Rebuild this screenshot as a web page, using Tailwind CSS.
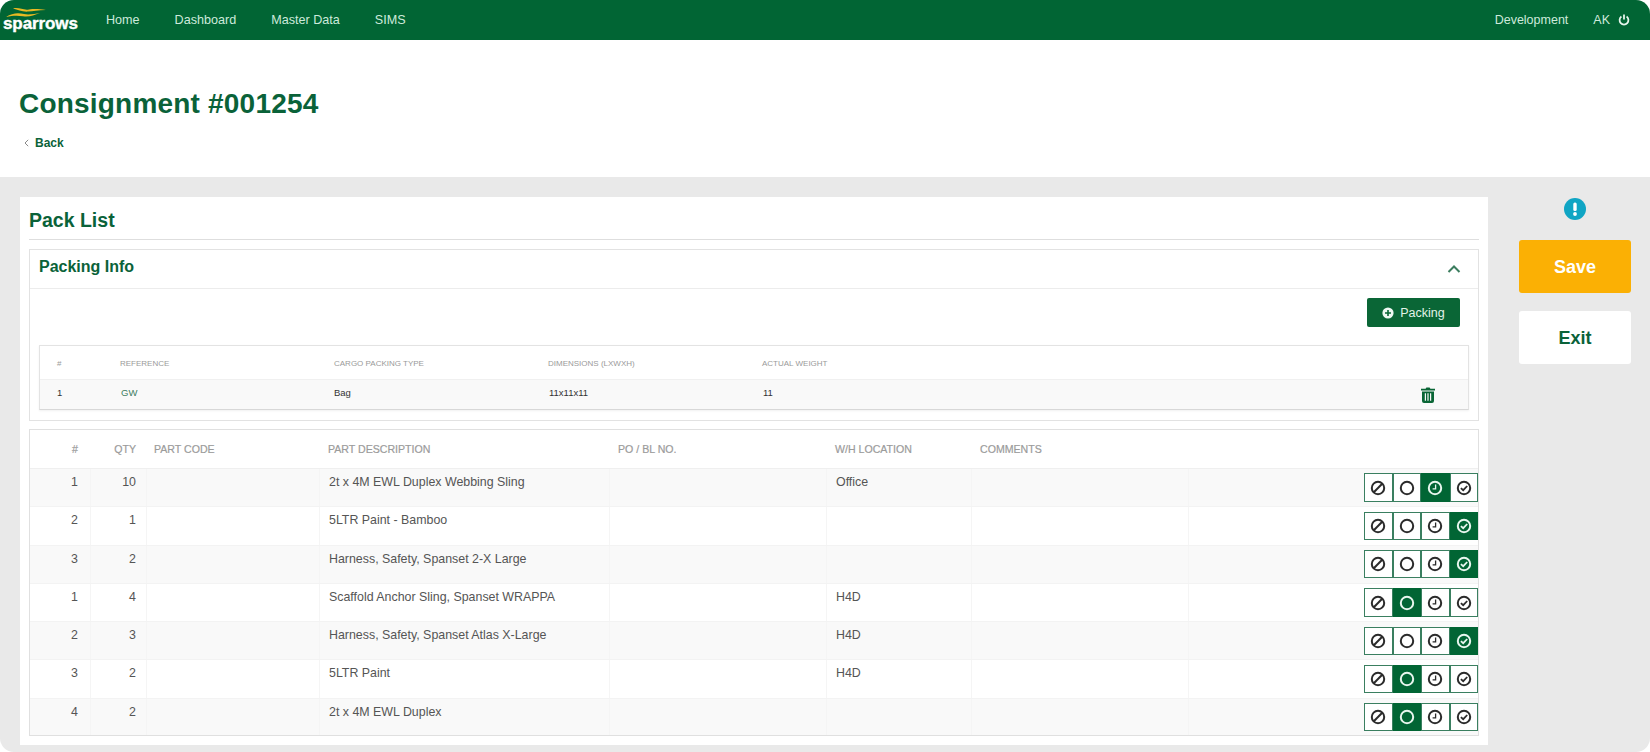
<!DOCTYPE html>
<html lang="en">
<head>
<meta charset="utf-8">
<title>Consignment #001254</title>
<script src="https://cdn.jsdelivr.net/npm/@tailwindcss/browser@4"></script>
</head>
<body class="bg-white">
<svg width="0" height="0" class="absolute">
  <symbol id="ban" viewBox="0 0 16 16"><circle cx="8" cy="8" r="6.2" fill="none" stroke="currentColor" stroke-width="2"/><path d="M3.8 12.2 12.2 3.8" stroke="currentColor" stroke-width="2"/></symbol>
  <symbol id="ring" viewBox="0 0 16 16"><circle cx="8" cy="8" r="6.2" fill="none" stroke="currentColor" stroke-width="2"/></symbol>
  <symbol id="clock" viewBox="0 0 16 16"><circle cx="8" cy="8" r="6.2" fill="none" stroke="currentColor" stroke-width="2"/><path d="M8.6 4.6V8.8H5.6" fill="none" stroke="currentColor" stroke-width="1.3"/></symbol>
  <symbol id="check" viewBox="0 0 16 16"><circle cx="8" cy="8" r="6.2" fill="none" stroke="currentColor" stroke-width="2"/><path d="M4.9 8.1 7.2 10.2 11.2 6" fill="none" stroke="currentColor" stroke-width="1.8"/></symbol>
</svg>
<div class="w-[1650px] h-[752px] overflow-hidden rounded-[14px] bg-white flex flex-col font-['Liberation_Sans',Arial,sans-serif]">

  <header class="h-10 shrink-0 bg-[#016534] flex items-center text-[12.6px] text-[#cdeadb]">
    <div class="relative w-[106px] h-10 shrink-0">
      <svg class="absolute left-[5px] top-[7px]" width="42" height="12" viewBox="0 0 42 12"><path d="M8 1.5C14 0 18 3.5 24 2.5C30 1.6 34 2 41 3C33 3.4 28 4 23 4.6C17 5 13 2.6 8 1.5Z" fill="#e8b923"/><path d="M1 10C7 6 13 5.5 19 7C24 8.2 30 6.6 35 6C29 8.4 24 10 18 9.2C12 8.2 7 8.6 1 10Z" fill="#e8b923"/></svg>
      <span class="absolute left-[3px] top-[15px] text-[17px] leading-[18px] font-bold text-white tracking-[-0.1px] [-webkit-text-stroke:0.4px_white]">sparrows</span>
    </div>
    <nav class="flex gap-[35px]">
      <a>Home</a><a>Dashboard</a><a>Master Data</a><a>SIMS</a>
    </nav>
    <div class="ml-auto flex items-center pr-[20px] text-[12.5px]">
      <span>Development</span>
      <span class="ml-[25px]">AK</span>
      <svg class="ml-[8px]" width="12" height="12" viewBox="0 0 12 12" fill="none" stroke="#e6f5ec" stroke-width="1.8"><path d="M3.4 2.6A4.4 4.4 0 1 0 8.6 2.6"/><path d="M6 .5V5.5"/></svg>
    </div>
  </header>

  <section class="h-[137px] shrink-0 pl-[19px] pt-[48px] text-[#0a6239]">
    <h1 class="text-[28px] leading-8 font-bold tracking-[0.2px]">Consignment #001254</h1>
    <a class="mt-[15px] ml-[5px] flex items-center gap-[6px] text-[12px] leading-4 font-bold">
      <svg width="5" height="8" viewBox="0 0 5 8" fill="none" stroke="#888" stroke-width="1"><path d="M4.2 .8 1 4l3.2 3.2"/></svg>
      Back
    </a>
  </section>

  <main class="flex-1 min-h-0 bg-[#e9e9e9] pl-5 pt-5 flex items-start">
    <div class="w-[1468px] h-[548px] bg-white px-[9px] shrink-0">
      <h2 class="h-[43px] border-b border-[#dedede] text-[19.5px] font-bold text-[#0a6239] leading-[46px]">Pack List</h2>

      <section class="mt-[9px] h-[172px] border border-[#e2e2e2]">
        <div class="h-[39px] border-b border-[#ececec] pl-[9px] pr-[17px] flex items-center justify-between">
          <h3 class="text-[16px] font-bold text-[#0a6239] leading-5 mb-[5px]">Packing Info</h3>
          <svg width="14" height="8" viewBox="0 0 14 8" fill="none" stroke="#3c7d5f" stroke-width="2"><path d="M1.5 7 7 1.5 12.5 7"/></svg>
        </div>
        <div class="flex justify-end pt-[9px] pr-[18px]">
          <button class="w-[93px] h-[29px] rounded-[2px] bg-[#0a6636] text-[#e2f3e9] text-[12.5px] flex items-center justify-center gap-[6px]">
            <svg width="12" height="12" viewBox="0 0 12 12"><circle cx="6" cy="6" r="5.6" fill="#eef8f2"/><path d="M6 3v6M3 6h6" stroke="#0a6636" stroke-width="1.6"/></svg>
            <span class="pt-[2px]">Packing</span>
          </button>
        </div>
        <div class="mx-[9px] mt-[18px] h-[65px] border border-[#e3e3e3] border-b-[#d8d8d8] shadow-[0_1px_2px_rgba(0,0,0,0.06)]">
          <div class="h-[33px] pt-[3px] grid grid-cols-[70px_213px_214px_215px_1fr] items-center text-[8px] text-[#9a9a9a] uppercase">
            <span class="pl-[17px]">#</span><span class="pl-[10px]">Reference</span><span class="pl-[11px]">Cargo Packing Type</span><span class="pl-[11px]">Dimensions (LxWxH)</span><span class="pl-[10px]">Actual Weight</span>
          </div>
          <div class="h-[30px] pb-[2px] bg-[#f9f9f9] border-t border-[#f0f0f0] grid grid-cols-[70px_213px_214px_215px_1fr] items-center text-[9.5px] text-[#333]">
            <span class="pl-[17px]">1</span>
            <span class="pl-[11px] text-[#3c7d5f] h-full flex items-center">GW</span>
            <span class="pl-[11px] h-full flex items-center">Bag</span>
            <span class="pl-[12px] h-full flex items-center">11x11x11</span>
            <span class="pl-[11px] h-full flex items-center justify-between">11
              <svg class="mr-[33px] mt-[3px]" width="14" height="16" viewBox="0 0 14 16" fill="#0a6636"><path d="M4.6 1.8 5.4.4h3.2l.8 1.4H14v1.6H0V1.8Z"/><path fill-rule="evenodd" d="M1 4.4h12V14a2 2 0 0 1-2 2H3a2 2 0 0 1-2-2ZM3.8 6.2v7.6h1.2V6.2Zm2.6 0v7.6h1.2V6.2Zm2.6 0v7.6h1.2V6.2Z"/></svg>
            </span>
          </div>
        </div>
      </section>

      <section class="mt-[8px] h-[307px] border border-[#e0e0e0] text-[12.4px] text-[#555]">
        <div class="h-[39px] pt-[2px] grid grid-cols-[60px_56px_173px_290px_217px_145px_1fr] items-center text-[10.6px] text-[#9b9b9b] uppercase border-b border-[#efefef] [-webkit-text-stroke:0.2px_#9b9b9b]">
          <span class="text-right pr-3">#</span><span class="text-right pr-[10px]">Qty</span><span class="pl-2">Part Code</span><span class="pl-[9px]">Part Description</span><span class="pl-[9px]">PO / BL No.</span><span class="pl-[9px]">W/H Location</span><span class="pl-[9px]">Comments</span>
        </div>

        <div class="h-[38.3px] bg-[#f9f9f9] border-b border-[#f3f3f3] grid grid-cols-[60px_56px_173px_290px_217px_145px_217px_1fr] leading-[27px]">
          <span class="text-right pr-3">1</span><span class="text-right pr-[10px] border-l border-[#f5f5f5]">10</span><span class="border-l border-[#f5f5f5]"></span><span class="pl-[9px] border-l border-[#f5f5f5]">2t x 4M EWL Duplex Webbing Sling</span><span class="border-l border-[#f5f5f5]"></span><span class="pl-[9px] border-l border-[#f5f5f5]">Office</span><span class="border-l border-[#f5f5f5]"></span>
          <div class="border-l border-[#f5f5f5] flex justify-end items-center">
            <button class="size-[28.5px] flex items-center justify-center border border-[#3a7f60] bg-white text-[#2b2b2b]"><svg width="16" height="16"><use href="#ban"/></svg></button>
            <button class="size-[28.5px] flex items-center justify-center border border-[#3a7f60] bg-white text-[#2b2b2b]"><svg width="16" height="16"><use href="#ring"/></svg></button>
            <button class="size-[28.5px] flex items-center justify-center border border-[#016534] bg-[#016534] text-[#e8f6ee]"><svg width="16" height="16"><use href="#clock"/></svg></button>
            <button class="size-[28.5px] flex items-center justify-center border border-[#3a7f60] bg-white text-[#2b2b2b]"><svg width="16" height="16"><use href="#check"/></svg></button>
          </div>
        </div>

        <div class="h-[38.3px] bg-white border-b border-[#f3f3f3] grid grid-cols-[60px_56px_173px_290px_217px_145px_217px_1fr] leading-[27px]">
          <span class="text-right pr-3">2</span><span class="text-right pr-[10px] border-l border-[#f5f5f5]">1</span><span class="border-l border-[#f5f5f5]"></span><span class="pl-[9px] border-l border-[#f5f5f5]">5LTR Paint - Bamboo</span><span class="border-l border-[#f5f5f5]"></span><span class="pl-[9px] border-l border-[#f5f5f5]"></span><span class="border-l border-[#f5f5f5]"></span>
          <div class="border-l border-[#f5f5f5] flex justify-end items-center">
            <button class="size-[28.5px] flex items-center justify-center border border-[#3a7f60] bg-white text-[#2b2b2b]"><svg width="16" height="16"><use href="#ban"/></svg></button>
            <button class="size-[28.5px] flex items-center justify-center border border-[#3a7f60] bg-white text-[#2b2b2b]"><svg width="16" height="16"><use href="#ring"/></svg></button>
            <button class="size-[28.5px] flex items-center justify-center border border-[#3a7f60] bg-white text-[#2b2b2b]"><svg width="16" height="16"><use href="#clock"/></svg></button>
            <button class="size-[28.5px] flex items-center justify-center border border-[#016534] bg-[#016534] text-[#e8f6ee]"><svg width="16" height="16"><use href="#check"/></svg></button>
          </div>
        </div>

        <div class="h-[38.3px] bg-[#f9f9f9] border-b border-[#f3f3f3] grid grid-cols-[60px_56px_173px_290px_217px_145px_217px_1fr] leading-[27px]">
          <span class="text-right pr-3">3</span><span class="text-right pr-[10px] border-l border-[#f5f5f5]">2</span><span class="border-l border-[#f5f5f5]"></span><span class="pl-[9px] border-l border-[#f5f5f5]">Harness, Safety, Spanset 2-X Large</span><span class="border-l border-[#f5f5f5]"></span><span class="pl-[9px] border-l border-[#f5f5f5]"></span><span class="border-l border-[#f5f5f5]"></span>
          <div class="border-l border-[#f5f5f5] flex justify-end items-center">
            <button class="size-[28.5px] flex items-center justify-center border border-[#3a7f60] bg-white text-[#2b2b2b]"><svg width="16" height="16"><use href="#ban"/></svg></button>
            <button class="size-[28.5px] flex items-center justify-center border border-[#3a7f60] bg-white text-[#2b2b2b]"><svg width="16" height="16"><use href="#ring"/></svg></button>
            <button class="size-[28.5px] flex items-center justify-center border border-[#3a7f60] bg-white text-[#2b2b2b]"><svg width="16" height="16"><use href="#clock"/></svg></button>
            <button class="size-[28.5px] flex items-center justify-center border border-[#016534] bg-[#016534] text-[#e8f6ee]"><svg width="16" height="16"><use href="#check"/></svg></button>
          </div>
        </div>

        <div class="h-[38.3px] bg-white border-b border-[#f3f3f3] grid grid-cols-[60px_56px_173px_290px_217px_145px_217px_1fr] leading-[27px]">
          <span class="text-right pr-3">1</span><span class="text-right pr-[10px] border-l border-[#f5f5f5]">4</span><span class="border-l border-[#f5f5f5]"></span><span class="pl-[9px] border-l border-[#f5f5f5]">Scaffold Anchor Sling, Spanset WRAPPA</span><span class="border-l border-[#f5f5f5]"></span><span class="pl-[9px] border-l border-[#f5f5f5]">H4D</span><span class="border-l border-[#f5f5f5]"></span>
          <div class="border-l border-[#f5f5f5] flex justify-end items-center">
            <button class="size-[28.5px] flex items-center justify-center border border-[#3a7f60] bg-white text-[#2b2b2b]"><svg width="16" height="16"><use href="#ban"/></svg></button>
            <button class="size-[28.5px] flex items-center justify-center border border-[#016534] bg-[#016534] text-[#e8f6ee]"><svg width="16" height="16"><use href="#ring"/></svg></button>
            <button class="size-[28.5px] flex items-center justify-center border border-[#3a7f60] bg-white text-[#2b2b2b]"><svg width="16" height="16"><use href="#clock"/></svg></button>
            <button class="size-[28.5px] flex items-center justify-center border border-[#3a7f60] bg-white text-[#2b2b2b]"><svg width="16" height="16"><use href="#check"/></svg></button>
          </div>
        </div>

        <div class="h-[38.3px] bg-[#f9f9f9] border-b border-[#f3f3f3] grid grid-cols-[60px_56px_173px_290px_217px_145px_217px_1fr] leading-[27px]">
          <span class="text-right pr-3">2</span><span class="text-right pr-[10px] border-l border-[#f5f5f5]">3</span><span class="border-l border-[#f5f5f5]"></span><span class="pl-[9px] border-l border-[#f5f5f5]">Harness, Safety, Spanset Atlas X-Large</span><span class="border-l border-[#f5f5f5]"></span><span class="pl-[9px] border-l border-[#f5f5f5]">H4D</span><span class="border-l border-[#f5f5f5]"></span>
          <div class="border-l border-[#f5f5f5] flex justify-end items-center">
            <button class="size-[28.5px] flex items-center justify-center border border-[#3a7f60] bg-white text-[#2b2b2b]"><svg width="16" height="16"><use href="#ban"/></svg></button>
            <button class="size-[28.5px] flex items-center justify-center border border-[#3a7f60] bg-white text-[#2b2b2b]"><svg width="16" height="16"><use href="#ring"/></svg></button>
            <button class="size-[28.5px] flex items-center justify-center border border-[#3a7f60] bg-white text-[#2b2b2b]"><svg width="16" height="16"><use href="#clock"/></svg></button>
            <button class="size-[28.5px] flex items-center justify-center border border-[#016534] bg-[#016534] text-[#e8f6ee]"><svg width="16" height="16"><use href="#check"/></svg></button>
          </div>
        </div>

        <div class="h-[38.3px] bg-white border-b border-[#f3f3f3] grid grid-cols-[60px_56px_173px_290px_217px_145px_217px_1fr] leading-[27px]">
          <span class="text-right pr-3">3</span><span class="text-right pr-[10px] border-l border-[#f5f5f5]">2</span><span class="border-l border-[#f5f5f5]"></span><span class="pl-[9px] border-l border-[#f5f5f5]">5LTR Paint</span><span class="border-l border-[#f5f5f5]"></span><span class="pl-[9px] border-l border-[#f5f5f5]">H4D</span><span class="border-l border-[#f5f5f5]"></span>
          <div class="border-l border-[#f5f5f5] flex justify-end items-center">
            <button class="size-[28.5px] flex items-center justify-center border border-[#3a7f60] bg-white text-[#2b2b2b]"><svg width="16" height="16"><use href="#ban"/></svg></button>
            <button class="size-[28.5px] flex items-center justify-center border border-[#016534] bg-[#016534] text-[#e8f6ee]"><svg width="16" height="16"><use href="#ring"/></svg></button>
            <button class="size-[28.5px] flex items-center justify-center border border-[#3a7f60] bg-white text-[#2b2b2b]"><svg width="16" height="16"><use href="#clock"/></svg></button>
            <button class="size-[28.5px] flex items-center justify-center border border-[#3a7f60] bg-white text-[#2b2b2b]"><svg width="16" height="16"><use href="#check"/></svg></button>
          </div>
        </div>

        <div class="h-[36px] bg-[#f9f9f9] grid grid-cols-[60px_56px_173px_290px_217px_145px_217px_1fr] leading-[27px]">
          <span class="text-right pr-3">4</span><span class="text-right pr-[10px] border-l border-[#f5f5f5]">2</span><span class="border-l border-[#f5f5f5]"></span><span class="pl-[9px] border-l border-[#f5f5f5]">2t x 4M EWL Duplex</span><span class="border-l border-[#f5f5f5]"></span><span class="pl-[9px] border-l border-[#f5f5f5]"></span><span class="border-l border-[#f5f5f5]"></span>
          <div class="border-l border-[#f5f5f5] flex justify-end items-center">
            <button class="size-[28.5px] flex items-center justify-center border border-[#3a7f60] bg-white text-[#2b2b2b]"><svg width="16" height="16"><use href="#ban"/></svg></button>
            <button class="size-[28.5px] flex items-center justify-center border border-[#016534] bg-[#016534] text-[#e8f6ee]"><svg width="16" height="16"><use href="#ring"/></svg></button>
            <button class="size-[28.5px] flex items-center justify-center border border-[#3a7f60] bg-white text-[#2b2b2b]"><svg width="16" height="16"><use href="#clock"/></svg></button>
            <button class="size-[28.5px] flex items-center justify-center border border-[#3a7f60] bg-white text-[#2b2b2b]"><svg width="16" height="16"><use href="#check"/></svg></button>
          </div>
        </div>
      </section>
    </div>

    <aside class="ml-[31px] w-[112px] shrink-0 flex flex-col items-center">
      <svg class="mt-[1px]" width="22" height="22" viewBox="0 0 22 22"><circle cx="11" cy="11" r="11" fill="#10a5c4"/><rect x="9.3" y="4.4" width="3.4" height="8.6" rx="1.5" fill="#fff"/><circle cx="11" cy="16" r="1.9" fill="#fff"/></svg>
      <button class="mt-[20px] w-full h-[53px] pt-[2px] rounded-[3px] bg-[#fbb004] text-white text-[18px] font-bold">Save</button>
      <button class="mt-[18px] w-full h-[53px] pt-[2px] rounded-[3px] bg-white text-[#0a6239] text-[18px] font-bold">Exit</button>
    </aside>
  </main>
</div>
</body>
</html>
